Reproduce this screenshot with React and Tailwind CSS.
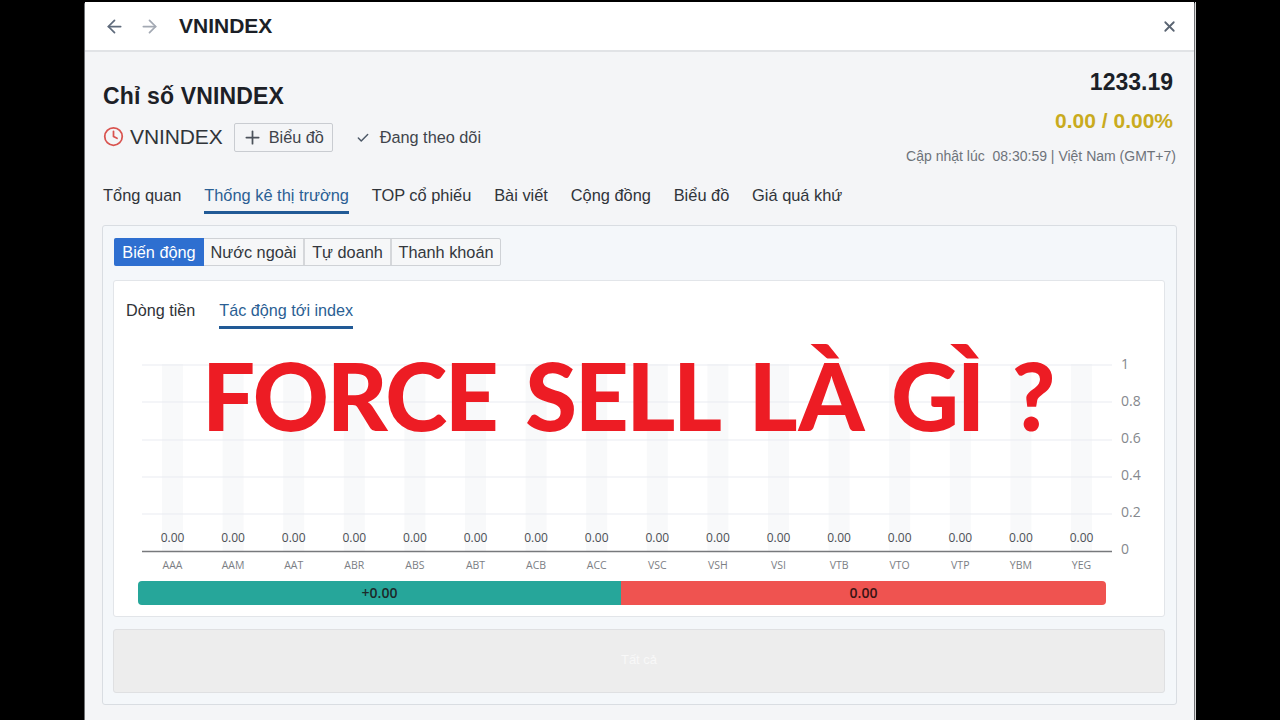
import React from "react";
import { ArrowLeft, ArrowRight, X, Plus, Check, Clock } from "lucide-react";

const arial = "font-['Liberation_Sans',Arial,sans-serif]";
const tickers = ["AAA","AAM","AAT","ABR","ABS","ABT","ACB","ACC","VSC","VSH","VSI","VTB","VTO","VTP","YBM","YEG"];
const step = 60.6;
const cx = (i) => 30.5 + i * step;
const ys = [84, 121, 159, 196, 233];
const yLabels = ["1","0.8","0.6","0.4","0.2","0"];

function Chart() {
  return (
    <svg width="1050" height="296" viewBox="0 0 1050 296" className="block">
      {tickers.map((t, i) => (
        <rect key={t} x={cx(i) - 10.5} y={83} width={21} height={187} fill="#f8f9fa" />
      ))}
      {ys.map((y) => (
        <line key={y} x1="0" x2="970" y1={y} y2={y} stroke="#e9ebf1" strokeWidth="1" />
      ))}
      <line x1="0" x2="970" y1="270.5" y2="270.5" stroke="#77797c" strokeWidth="1.3" />
      {tickers.map((t, i) => (
        <g key={t} fontFamily="'Open Sans',sans-serif" textAnchor="middle">
          <text x={cx(i)} y={261} fontSize="12" fill="#4b4f55">0.00</text>
          <text x={cx(i)} y={288} fontSize="10.5" fill="#7b7e84">{t}</text>
        </g>
      ))}
      {yLabels.map((l, i) => (
        <text key={l} x="979" y={88 + i * 37} fontSize="14" fontFamily="'Open Sans',sans-serif" fill="#85888d">{l}</text>
      ))}
    </svg>
  );
}

export default function App() {
  return (
    <div className={`w-[1280px] h-[720px] overflow-hidden bg-black flex pl-[84px] pt-[2px] ${arial}`}>
      <div className="w-[1111px] h-[730px] shrink-0 bg-[#f4f5f7] rounded-t-[3px] border-l border-r border-[#6f7174]">
        <div className="h-[50px] bg-white border-b-2 border-[#e1e3e6] flex items-center pl-[19px] pr-[15px]">
          <ArrowLeft size={21} strokeWidth={2} className="text-[#5f6b7c]" />
          <ArrowRight size={21} strokeWidth={2} className="text-[#a3a9b3] ml-[14px]" />
          <span className="ml-[19px] text-[21px] font-bold text-[#1b1f27]">VNINDEX</span>
          <X size={17} strokeWidth={2.5} className="ml-auto mr-[1px] text-[#5a6472]" />
        </div>

        <div className="flex justify-between pl-[18px] pr-[18px]">
          <div>
            <div className="mt-[29px] text-[23px] leading-[30px] font-bold text-[#1c2026] tracking-[0.15px]">Chỉ số VNINDEX</div>
            <div className="mt-[12px] flex items-center h-[29px]">
              <Clock size={21} strokeWidth={2} className="text-[#d9534f] -mt-[2px]" />
              <span className="ml-[6px] text-[21px] text-[#30343a] tracking-[-0.1px] -mt-[2px]">VNINDEX</span>
              <div className="ml-[11px] w-[99px] h-[29px] border border-[#c9ccd1] rounded-[2px] flex items-center pl-[7px] text-[#3f444b]">
                <Plus size={21} strokeWidth={2} className="text-[#4c525b]" />
                <span className="ml-[6px] text-[16.3px]">Biểu đồ</span>
              </div>
              <Check size={14} strokeWidth={2.5} className="ml-[23px] text-[#4c5867]" />
              <span className="ml-[10px] text-[16.3px] text-[#3f444b]">Đang theo dõi</span>
            </div>
          </div>
          <div className="flex flex-col items-end">
            <div className="mt-[16px] mr-[3px] text-[23px] leading-[28px] font-bold text-[#1b1f27]">1233.19</div>
            <div className="mt-[11px] mr-[3px] text-[21px] leading-[28px] font-bold text-[#c9ab1e]">0.00 / 0.00%</div>
            <div className="mt-[12px] text-[14px] leading-[18px] text-[#6e737a] whitespace-pre">Cập nhật lúc  08:30:59 | Việt Nam (GMT+7)</div>
          </div>
        </div>

        <div className="mt-[14px] ml-[18px] flex gap-[22.8px] text-[16.4px] text-[#30343a]">
          <div className="h-[35px] pt-[4px]">Tổng quan</div>
          <div className="h-[35px] pt-[4px] whitespace-nowrap border-b-[3px] border-[#215a96] text-[#2b5f94]">Thống kê thị trường</div>
          <div className="h-[35px] pt-[4px]">TOP cổ phiếu</div>
          <div className="h-[35px] pt-[4px]">Bài viết</div>
          <div className="h-[35px] pt-[4px]">Cộng đồng</div>
          <div className="h-[35px] pt-[4px]">Biểu đồ</div>
          <div className="h-[35px] pt-[4px]">Giá quá khứ</div>
        </div>

        <div className="mt-[11px] ml-[17px] w-[1075px] h-[480px] bg-[#f4f7fa] border border-[#d9dde2] rounded-[3px] pt-[12px] px-[10px]">
          <div className="flex h-[28px] w-max ml-px text-[16.3px] text-[#33373d] border border-[#cfd2d6] rounded-[2px] bg-[#f6f7f8]">
            <div className="w-[90px] -ml-px -mt-px h-[28px] flex items-center justify-center bg-[#2e6fd0] text-white rounded-l-[2px]">Biến động</div>
            <div className="w-[101px] flex items-center justify-center border-r-2 border-[#d5d7da]">Nước ngoài</div>
            <div className="w-[87px] flex items-center justify-center border-r-2 border-[#d5d7da]">Tự doanh</div>
            <div className="w-[108px] flex items-center justify-center">Thanh khoán</div>
          </div>

          <div className="relative mt-[14px] w-[1052px] h-[337px] bg-white border border-[#e2e5e9] rounded-[3px] overflow-hidden">
            <div className="flex gap-[24px] ml-[12px] mt-[17px] text-[16.2px] h-[31px]">
              <div className="text-[#2f3338]">Dòng tiền</div>
              <div className="h-[31px] border-b-[3px] border-[#215a96] text-[#2b5f94]">Tác động tới index</div>
            </div>
            <div className="ml-[28px] -mt-[48px]">
              <Chart />
            </div>
            <div className="ml-[24px] mt-[4px] w-[968px] h-[24px] flex rounded-[4px] overflow-hidden font-['Open_Sans',sans-serif] text-[14px] font-semibold text-[#1d2a2a]">
              <div className="w-[483px] bg-[#26a69a] flex items-center justify-center pb-[1px]">+0.00</div>
              <div className="flex-1 bg-[#ef5350] flex items-center justify-center pb-[1px] text-[#3a1414]">0.00</div>
            </div>
            <div className="absolute left-[88px] top-[58px] font-['Lato',sans-serif] font-black text-[94px] leading-[112px] text-[#ed1c24] whitespace-nowrap tracking-[-2.4px] [word-spacing:9px] [font-kerning:none]">FORCE SELL <span className="tracking-[1px]">L</span>À GÌ ?</div>
          </div>

          <div className="mt-[12px] w-[1052px] h-[64px] bg-[#ededed] border border-[#dfe0e2] rounded-[3px] flex items-center justify-center pb-[2px] text-[13px] text-[#f8f8f8]">Tất cả</div>
        </div>
      </div>
      <div className="w-[1px] h-full bg-[#d8d8d8] shrink-0" />
    </div>
  );
}
